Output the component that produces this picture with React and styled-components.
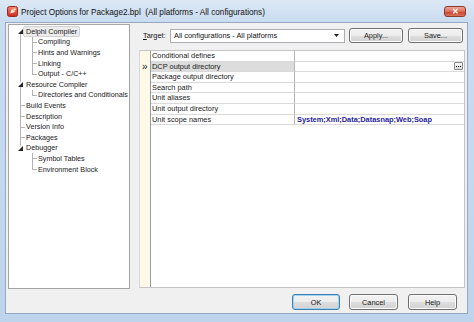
import React from "react";
import styled, { createGlobalStyle } from "styled-components";

const Global = createGlobalStyle`
    html, body { margin: 0; padding: 0; overflow: hidden; background: #bcd2ea; }
    * { box-sizing: border-box; }
`;

const Window = styled.div`
    width: 474px;
    height: 322px;
    display: flex;
    flex-direction: column;
    background: linear-gradient(#dce8f5 0px, #cadcf0 22px, #bed4ec 100%);
    font-family: "Liberation Sans", Arial, sans-serif;
    color: #111;
`;

const TitleBar = styled.div`
    height: 22px;
    display: flex;
    align-items: center;
    padding: 0 8px 0 7px;
`;

const TitleText = styled.div`
    flex: 1;
    font-size: 8.2px;
    margin-left: 3px;
    margin-top: 2px;
    color: #101010;
    white-space: pre;
`;

const CloseBtn = styled.div`
    width: 22px;
    height: 11px;
    align-self: flex-start;
    margin-top: 6px;
    border: 1px solid #8b3b30;
    border-radius: 3px;
    background: linear-gradient(#eea597 0%, #dd6c5a 50%, #c8402c 51%, #d8735c 100%);
    display: flex;
    align-items: center;
    justify-content: center;
    color: #fff;
    font-size: 8px;
    font-weight: bold;
    line-height: 1;
`;

const Client = styled.div`
    flex: 1;
    margin: 0 6px 8px 5px;
    background: #f0f0f0;
    border: 1px solid #94a9c3;
    display: flex;
    flex-direction: column;
`;

const Main = styled.div`
    flex: 1;
    display: flex;
    padding: 1px 2px 0 2px;
    gap: 9px;
    min-height: 0;
`;

const Tree = styled.div`
    width: 122px;
    background: #fff;
    border: 1px solid #a5a5a5;
    padding-top: 1px;
`;

const TreeRow = styled.div`
    height: 10.6px;
    display: flex;
    align-items: center;
    font-size: 7.2px;
    color: #1a1a1a;
`;

const Connector = styled.div`
    position: relative;
    width: ${p => p.$w}px;
    height: 100%;
    flex-shrink: 0;
    &::before {
        content: "";
        display: ${p => (p.$v ? "block" : "none")};
        position: absolute;
        left: ${p => p.$x}px;
        top: ${p => (p.$first ? "50%" : "0")};
        bottom: ${p => (p.$end ? "50%" : "0")};
        border-left: 1px solid #b4b4b4;
    }
    &::after {
        content: "";
        display: ${p => (p.$h ? "block" : "none")};
        position: absolute;
        left: ${p => p.$x}px;
        width: ${p => p.$w - p.$x - 1}px;
        top: 50%;
        border-top: 1px solid #b4b4b4;
    }
`;

const Expander = styled.svg`
    position: absolute;
    left: ${p => p.$x - 2}px;
    top: 3px;
    background: #fff;
`;

const TreeLabel = styled.span`
    padding: 0 2px;
    line-height: 9px;
    white-space: nowrap;
    border: 1px solid ${p => (p.$selected ? "#d2d2d2" : "transparent")};
    background: ${p => (p.$selected ? "#ececec" : "transparent")};
    border-radius: 2px;
    margin-left: -3px;
`;

const Right = styled.div`
    flex: 1;
    display: flex;
    flex-direction: column;
    min-width: 0;
`;

const Toolbar = styled.div`
    margin-top: 4px;
    height: 15px;
    display: flex;
    align-items: center;
    font-size: 7.4px;
`;

const Label = styled.span`
    margin-left: 4px;
    width: 27px;
    u { text-decoration: underline; }
`;

const Combo = styled.div`
    width: 175px;
    height: 14px;
    background: #fff;
    border: 1px solid #abadb3;
    display: flex;
    align-items: center;
    padding-left: 3px;
    padding-right: 5px;
    span { flex: 1; }
`;

const Button = styled.div`
    width: ${p => p.$w}px;
    height: ${p => p.$h || 15}px;
    margin-left: ${p => p.$ml || 0}px;
    border: 1px solid ${p => (p.$default ? "#3c7fb1" : "#707070")};
    border-radius: 3px;
    background: linear-gradient(#f3f3f3 0%, #ececec 50%, #dedede 51%, #d2d2d2 100%);
    box-shadow: inset 0 0 0 1px ${p => (p.$default ? "#9ed3f2" : "#fcfcfc")};
    display: flex;
    align-items: center;
    justify-content: center;
    font-size: 7.4px;
    color: #1a1a1a;
`;

const Grid = styled.div`
    flex: 1;
    margin-top: 7px;
    margin-bottom: 1px;
    display: flex;
    border: 1px solid #c4c4c4;
    border-left-color: #d8d8d8;
    background: #fff;
`;

const Gutter = styled.div`
    width: 11px;
    background: #fdf9e9;
    border-right: 1px solid #9a9a9a;
`;

const GutterCell = styled.div`
    height: 10.6px;
    font-size: 10px;
    line-height: 9px;
    padding-left: 2px;
    color: #222;
`;

const Table = styled.div`
    flex: 1;
    display: flex;
    flex-direction: column;
`;

const Row = styled.div`
    height: 10.6px;
    display: flex;
    font-size: 7.4px;
`;

const NameCell = styled.div`
    width: 144px;
    border-right: 1px solid #b4b4b4;
    border-bottom: 1px solid #dadada;
    background: ${p => (p.$active ? "#dcdcdc" : "#fff")};
    padding-left: 1px;
    line-height: 10px;
    white-space: nowrap;
    color: #1a1a1a;
`;

const ValueCell = styled.div`
    flex: 1;
    border-bottom: 1px solid #dadada;
    display: flex;
    align-items: center;
    padding-left: 2px;
    padding-right: 1px;
    font-weight: bold;
    color: #1e24a0;
    white-space: nowrap;
    span { flex: 1; }
`;

const Ellipsis = styled.div`
    width: 9px;
    height: 8px;
    border: 1px solid #8a8a8a;
    border-radius: 1px;
    background: linear-gradient(#fafafa, #dcdcdc);
    display: flex;
    align-items: center;
    justify-content: center;
    gap: 1px;
    i {
        width: 1px;
        height: 1px;
        background: #000;
    }
`;

const Footer = styled.div`
    height: 24px;
    display: flex;
    justify-content: flex-end;
    align-items: flex-start;
    padding: 5px 10px 0 0;
`;

const tree = [
    { label: "Delphi Compiler", level: 0, expand: true, selected: true, first: true },
    { label: "Compiling", level: 1 },
    { label: "Hints and Warnings", level: 1 },
    { label: "Linking", level: 1 },
    { label: "Output - C/C++", level: 1, last: true },
    { label: "Resource Compiler", level: 0, expand: true },
    { label: "Directories and Conditionals", level: 1, last: true },
    { label: "Build Events", level: 0 },
    { label: "Description", level: 0 },
    { label: "Version Info", level: 0 },
    { label: "Packages", level: 0 },
    { label: "Debugger", level: 0, expand: true, end: true },
    { label: "Symbol Tables", level: 1, parentEnd: true },
    { label: "Environment Block", level: 1, last: true, parentEnd: true },
];

const rows = [
    { name: "Conditional defines", value: "" },
    { name: "DCP output directory", value: "", active: true },
    { name: "Package output directory", value: "" },
    { name: "Search path", value: "" },
    { name: "Unit aliases", value: "" },
    { name: "Unit output directory", value: "" },
    { name: "Unit scope names", value: "System;Xml;Data;Datasnap;Web;Soap" },
];

function TreeItem({ item }) {
    if (item.level === 0) {
        return (
            <TreeRow>
                <Connector $w={17} $x={11} $v $h={!item.expand} $first={item.first} $end={item.end}>
                    {item.expand && (
                        <Expander $x={11} width="5" height="5" viewBox="0 0 5 5">
                            <polygon points="5,0 5,5 0,5" fill="#262626" />
                        </Expander>
                    )}
                </Connector>
                <TreeLabel $selected={item.selected}>{item.label}</TreeLabel>
            </TreeRow>
        );
    }
    return (
        <TreeRow>
            <Connector $w={17} $x={11} $v={!item.parentEnd} />
            <Connector $w={12} $x={6} $v $h $end={item.last} />
            <TreeLabel>{item.label}</TreeLabel>
        </TreeRow>
    );
}

const AppIcon = () => (
    <svg width="11" height="11" viewBox="0 0 11 11">
        <defs>
            <linearGradient id="ig" x1="0" y1="0" x2="0" y2="1">
                <stop offset="0" stopColor="#f7876f" />
                <stop offset="1" stopColor="#c8281c" />
            </linearGradient>
        </defs>
        <rect x="0.5" y="0.5" width="10" height="10" rx="2" fill="url(#ig)" stroke="#9a2a1e" />
        <path d="M3 7.5 L5 3 L8 6 Z" fill="#fff" opacity="0.9" />
        <circle cx="7.5" cy="3.5" r="1.2" fill="#ffe2a8" />
    </svg>
);

export default function App() {
    return (
        <>
            <Global />
            <Window>
                <TitleBar>
                    <AppIcon />
                    <TitleText>Project Options for Package2.bpl  (All platforms - All configurations)</TitleText>
                    <CloseBtn>✕</CloseBtn>
                </TitleBar>
                <Client>
                    <Main>
                        <Tree>
                            {tree.map(item => <TreeItem key={item.label} item={item} />)}
                        </Tree>
                        <Right>
                            <Toolbar>
                                <Label><u>T</u>arget:</Label>
                                <Combo>
                                    <span>All configurations - All platforms</span>
                                    <svg width="5" height="3" viewBox="0 0 5 3">
                                        <polygon points="0,0 5,0 2.5,3" fill="#222" />
                                    </svg>
                                </Combo>
                                <Button $w={54} $ml={4}>Apply...</Button>
                                <Button $w={55} $ml={5}>Save...</Button>
                            </Toolbar>
                            <Grid>
                                <Gutter>
                                    {rows.map(r => <GutterCell key={r.name}>{r.active ? "»" : ""}</GutterCell>)}
                                </Gutter>
                                <Table>
                                    {rows.map(r => (
                                        <Row key={r.name}>
                                            <NameCell $active={r.active}>{r.name}</NameCell>
                                            <ValueCell>
                                                <span>{r.value}</span>
                                                {r.active && <Ellipsis><i /><i /><i /></Ellipsis>}
                                            </ValueCell>
                                        </Row>
                                    ))}
                                </Table>
                            </Grid>
                        </Right>
                    </Main>
                    <Footer>
                        <Button $w={48} $h={16} $default>OK</Button>
                        <Button $w={49} $h={16} $ml={9}>Cancel</Button>
                        <Button $w={49} $h={16} $ml={10}>Help</Button>
                    </Footer>
                </Client>
            </Window>
        </>
    );
}
